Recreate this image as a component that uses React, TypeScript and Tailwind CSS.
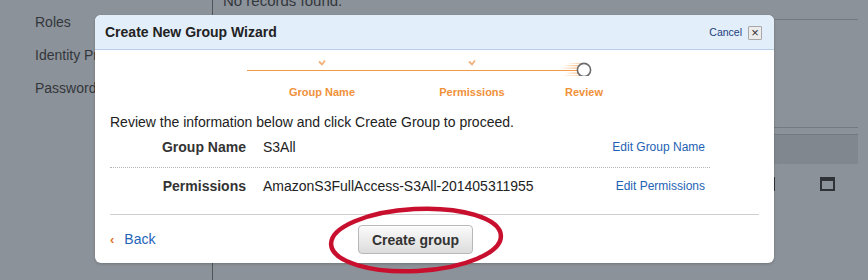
import React from "react";

const font = { fontFamily: '"Liberation Sans", Arial, sans-serif' };

function StepTrack() {
  // progress line, done checks and the current-step circle
  return (
    <svg width="374" height="20" viewBox="0 0 374 20" className="block">
      <defs>
        <linearGradient id="blur" x1="0" x2="1" y1="0" y2="0">
          <stop offset="0" stopColor="#f5a35a" stopOpacity="0" />
          <stop offset="1" stopColor="#f5a35a" stopOpacity="0.9" />
        </linearGradient>
      </defs>
      <line x1="0" y1="14.5" x2="332" y2="14.5" stroke="#f2994a" strokeWidth="1.2" />
      <path d="M72 5.5 L75 8.5 L78 4.5" fill="none" stroke="#f2b07a" strokeWidth="1.8" />
      <path d="M222 5.5 L225 8.5 L228 4.5" fill="none" stroke="#f2b07a" strokeWidth="1.8" />
      <rect x="316" y="9" width="18" height="1.2" fill="url(#blur)" />
      <rect x="312" y="11.5" width="22" height="1.2" fill="url(#blur)" />
      <rect x="318" y="16.5" width="16" height="1.2" fill="url(#blur)" />
      <rect x="314" y="19" width="20" height="1" fill="url(#blur)" opacity="0.6" />
      <rect x="320" y="7" width="14" height="1" fill="url(#blur)" opacity="0.6" />
      <circle cx="337" cy="14" r="6.6" fill="#fff" stroke="#6c6c6c" strokeWidth="1.6" />
    </svg>
  );
}

function Backdrop() {
  return (
    <div className="flex h-[280px] w-[868px] overflow-hidden bg-[#8c9299] text-[#33373c]" style={font}>
      <div className="w-[213px] shrink-0 border-r border-[#50555b] pl-[35px] pt-[13px] text-[14px]">
        <div className="h-[33px] leading-[18px]">Roles</div>
        <div className="h-[33px] leading-[18px]">Identity Providers</div>
        <div className="h-[33px] leading-[18px]">Password Policy</div>
      </div>
      <div className="flex-1 px-[10px]">
        <div className="-mt-[8px] h-[28px] border-b border-[#757a81] text-[15px] leading-[18px]">
          No records found.
        </div>
        <div className="h-[108px] border-b border-[#757a81]" />
        <div className="mt-[6px] h-[30px] border-t border-[#757a81] bg-[#81878e]" />
        <div className="flex h-[27px] items-end justify-end gap-[45px] pr-[23px]">
          <div className="h-[14px] w-[15px] border-2 border-t-4 border-[#2f3338]" />
          <div className="h-[14px] w-[15px] border-2 border-t-4 border-[#2f3338]" />
        </div>
      </div>
    </div>
  );
}

function Wizard() {
  return (
    <div
      className="absolute left-[95px] top-[15px] flex h-[248px] w-[679px] flex-col overflow-hidden rounded-[6px] bg-white shadow-[0_1px_3px_rgba(0,0,0,0.2)]"
      style={font}
    >
      <div className="flex h-[35px] shrink-0 items-center justify-between border-b border-[#b9cde4] bg-[#e3eefb] pl-[10px] pr-[12px]">
        <span className="text-[14px] font-bold text-[#222]">Create New Group Wizard</span>
        <div className="flex items-center gap-[6px] pt-[1px]">
          <span className="text-[10.5px] text-[#22407a]">Cancel</span>
          <span className="flex h-[14px] w-[14px] items-center justify-center rounded-[1px] border border-[#a8a8a8] bg-[#ececec] text-[13px] leading-none text-[#333]">
            ×
          </span>
        </div>
      </div>

      <div className="flex flex-1 flex-col px-[15px]">
        <div className="ml-[137px] mt-[6px]">
          <StepTrack />
          <div className="mt-[10px] grid grid-cols-[150px_150px_74px] text-center text-[11px] font-bold leading-[13px] text-[#f0913a]">
            <span>Group Name</span>
            <span>Permissions</span>
            <span>Review</span>
          </div>
        </div>

        <p className="mt-[14px] text-[14px] leading-[18px] text-[#222]">
          Review the information below and click Create Group to proceed.
        </p>

        <div className="w-[600px] text-[14px] leading-[18px] text-[#222]">
          <div className="flex items-center border-b border-dotted border-[#b5b5b5] pb-[11px] pt-[7px]">
            <span className="w-[136px] text-right font-bold text-[#333]">Group Name</span>
            <span className="ml-[17px] flex-1">S3All</span>
            <span className="pr-[5px] text-[12px] text-[#1d62b4]">Edit Group Name</span>
          </div>
          <div className="flex items-center pb-[19px] pt-[9px]">
            <span className="w-[136px] text-right font-bold text-[#333]">Permissions</span>
            <span className="ml-[17px] flex-1">AmazonS3FullAccess-S3All-201405311955</span>
            <span className="pr-[5px] text-[12px] text-[#1d62b4]">Edit Permissions</span>
          </div>
        </div>

        <div className="flex border-t border-[#cfcfcf] pt-[10px]">
          <div className="flex w-[248px] items-center gap-[10px] self-start pt-[5px]">
            <span className="text-[13px] font-bold leading-none text-[#e2731f]">‹</span>
            <span className="text-[14px] leading-[18px] text-[#1e64b8]">Back</span>
          </div>
          <button className="h-[29px] w-[115px] rounded-[4px] border border-[#b8b8b8] bg-linear-to-b from-[#fbfbfb] to-[#dcdcdc] pt-[2px] text-[14px] font-bold text-[#333] shadow-[inset_0_1px_0_#fff]">
            Create group
          </button>
        </div>
      </div>
    </div>
  );
}

export default function App() {
  return (
    <div className="relative h-[280px] w-[868px] overflow-hidden">
      <Backdrop />
      <Wizard />
      {/* annotation ring drawn over the button */}
      <svg
        className="pointer-events-none absolute left-[324px] top-[202px]"
        width="184"
        height="76"
        viewBox="0 0 184 76"
      >
        <ellipse
          cx="92"
          cy="38"
          rx="85"
          ry="31"
          fill="none"
          stroke="#c8102e"
          strokeWidth="4.5"
          transform="rotate(-3 92 38)"
        />
      </svg>
    </div>
  );
}
